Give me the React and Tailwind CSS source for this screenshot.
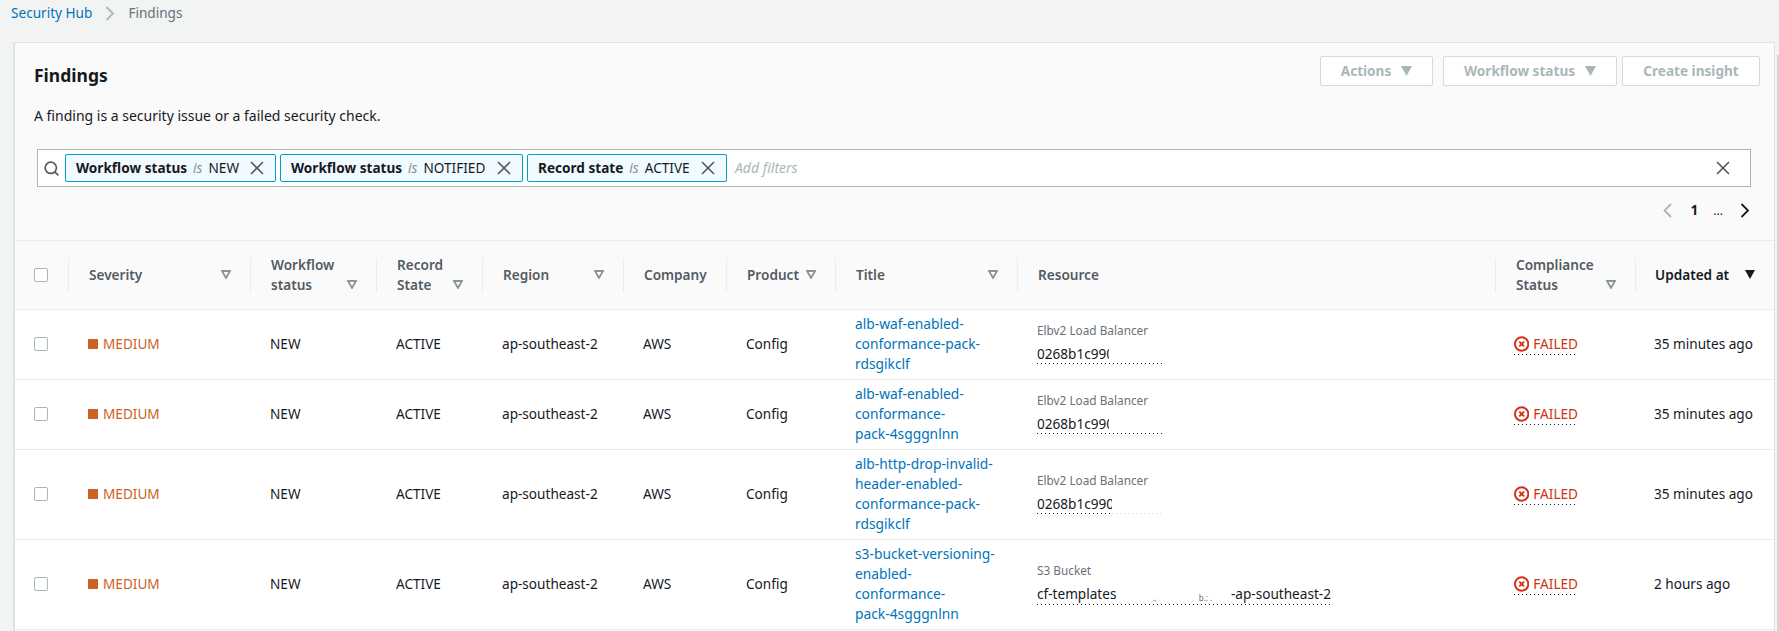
import { Search, X } from 'lucide-react';

const dots = 'bg-[repeating-linear-gradient(90deg,#16191f_0,#16191f_1.5px,transparent_1.5px,transparent_4px)] bg-[length:100%_1px] bg-bottom bg-no-repeat';
const lightDots = 'bg-[repeating-linear-gradient(90deg,#d5dbdb_0,#d5dbdb_1.5px,transparent_1.5px,transparent_4px)] bg-[length:100%_1px] bg-bottom bg-no-repeat';

const columns = [
  { label: 'Severity', width: 'w-[182px]', sort: true },
  { label: 'Workflow\nstatus', width: 'w-[126px]', sort: true },
  { label: 'Record\nState', width: 'w-[106px]', sort: true },
  { label: 'Region', width: 'w-[141px]', sort: true },
  { label: 'Company', width: 'w-[103px]' },
  { label: 'Product', width: 'w-[109px]', sort: true },
  { label: 'Title', width: 'w-[182px]', sort: true },
  { label: 'Resource', width: 'w-[478px]' },
  { label: 'Compliance\nStatus', width: 'w-[140px]', sort: true },
];

const rows = [
  {
    title: ['alb-waf-enabled-', 'conformance-pack-', 'rdsgikclf'],
    type: 'Elbv2 Load Balancer',
    clip: 'w-[72px]',
    id: '0268b1c990',
    rest: 'w-[54px]',
    restDots: dots,
    updated: '35 minutes ago',
  },
  {
    title: ['alb-waf-enabled-', 'conformance-', 'pack-4sgggnlnn'],
    type: 'Elbv2 Load Balancer',
    clip: 'w-[72px]',
    id: '0268b1c990',
    rest: 'w-[54px]',
    restDots: dots,
    updated: '35 minutes ago',
  },
  {
    title: ['alb-http-drop-invalid-', 'header-enabled-', 'conformance-pack-', 'rdsgikclf'],
    type: 'Elbv2 Load Balancer',
    clip: 'w-[75px]',
    id: '0268b1c990',
    rest: 'w-[51px]',
    restDots: lightDots,
    updated: '35 minutes ago',
  },
  {
    title: ['s3-bucket-versioning-', 'enabled-', 'conformance-', 'pack-4sgggnlnn'],
    type: 'S3 Bucket',
    bucket: true,
    updated: '2 hours ago',
  },
];

const chips = [
  { field: 'Workflow status', value: 'NEW', width: 'w-[211px]' },
  { field: 'Workflow status', value: 'NOTIFIED', width: 'w-[243px]' },
  { field: 'Record state', value: 'ACTIVE', width: 'w-[200px]' },
];

function Chevron({ dir = 'right', color = '#16191f', className = '' }) {
  const points = dir === 'right' ? '1.5,1 8,7.5 1.5,14' : '8,1 1.5,7.5 8,14';
  return (
    <svg width="10" height="15" viewBox="0 0 10 15" fill="none" className={className}>
      <polyline points={points} stroke={color} strokeWidth="1.8" />
    </svg>
  );
}

function SortIcon({ filled }) {
  return (
    <span className="h-5 flex items-center">
      <svg width="10" height="9" viewBox="0 0 10 9">
        {filled ? (
          <polygon points="0,0 10,0 5,9" fill="#16191f" />
        ) : (
          <polygon points="1,1 9,1 5,8" fill="none" stroke="#879596" strokeWidth="1.8" />
        )}
      </svg>
    </span>
  );
}

function Checkbox() {
  return <div className="w-[14px] h-[14px] ml-[19px] rounded-[2px] border border-[#aab7b8] bg-white" />;
}

function ActionButton({ label, width, caret }) {
  return (
    <button className={`${width} h-[30px] flex items-center justify-center gap-[10px] bg-white border border-[#d5dbdb] rounded-[2px] font-bold text-[#aab7b8]`}>
      {label}
      {caret && (
        <svg width="11" height="10" viewBox="0 0 11 10">
          <polygon points="0,0 11,0 5.5,10" fill="#aab7b8" />
        </svg>
      )}
    </button>
  );
}

function FailedIcon() {
  return (
    <svg width="16" height="16" viewBox="0 0 16 16" fill="none" stroke="#d13212" strokeWidth="2">
      <circle cx="8" cy="8" r="7" />
      <path d="M5.5 5.5l5 5M10.5 5.5l-5 5" />
    </svg>
  );
}

export default function App() {
  return (
    <div className="h-[631px] overflow-hidden bg-[#f2f3f3] text-[13.6px] text-[#16191f] font-['Noto_Sans',sans-serif]">
      <div className="h-[42px] pl-[11px] pb-[16px] flex items-center">
        <span className="text-[#0073bb]">Security Hub</span>
        <Chevron color="#aab7b8" className="ml-[13px] mr-[13px]" />
        <span className="text-[#687078]">Findings</span>
      </div>

      <div className="flex">
        <div className="ml-[13px] w-[1762px] h-[600px] bg-[#fafafa] border-l-2 border-r border-t border-[#dfe3e3]">
          <div className="h-[47px] flex justify-between pt-[13px] pl-[19px] pr-[14px]">
            <h1 className="mt-[6px] text-[17.5px] leading-[27px] font-bold">Findings</h1>
            <div className="flex">
              <ActionButton label="Actions" width="w-[113px]" caret />
              <div className="ml-[10px]"><ActionButton label="Workflow status" width="w-[174px]" caret /></div>
              <div className="ml-[5px]"><ActionButton label="Create insight" width="w-[138px]" /></div>
            </div>
          </div>

          <p className="pl-[19px] mt-[16px] text-sm leading-5">A finding is a security issue or a failed security check.</p>

          <div className="mt-[23px] ml-[22px] w-[1714px] h-[38px] flex items-center bg-white border border-[#aab7b8]">
            <Search size={17} strokeWidth={2.4} className="ml-[5px] mr-[5px] text-[#545b64]" />
            {chips.map((chip, i) => (
              <div key={i} className={`${chip.width} h-[28px] mr-[4px] flex items-center justify-between pl-[10px] pr-[7px] bg-[#f1faff] border border-[#00a1c9] rounded-[2px]`}>
                <span className="whitespace-nowrap">
                  <span className="font-bold">{chip.field}</span>
                  <span className="italic text-[#879596] mx-[6px]">is</span>
                  {chip.value}
                </span>
                <X size={22} strokeWidth={1.8} className="text-[#545b64]" />
              </div>
            ))}
            <span className="ml-[4px] italic text-sm text-[#aab7b8]">Add filters</span>
            <X size={22} strokeWidth={1.8} className="ml-auto mr-[16px] text-[#545b64]" />
          </div>

          <div className="h-[54px] pb-[6px] flex items-center justify-end pr-[24px] border-b border-[#eaeded]">
            <Chevron dir="left" color="#aab7b8" />
            <span className="ml-[18px] font-bold">1</span>
            <span className="ml-[15px] text-xs">...</span>
            <Chevron className="ml-[17px]" />
          </div>

          <table className="w-[1759px] table-fixed border-collapse">
            <thead>
              <tr className="h-[68px] border-b border-[#eaeded]">
                <th className="w-[53px] p-0"><Checkbox /></th>
                {columns.map((col) => (
                  <th key={col.label} className={`${col.width} p-0 font-semibold text-left text-[#545b64]`}>
                    <div className="h-[34px] flex items-center pl-5 pr-[19px] border-l border-[#eaeded]">
                      <div className="w-full flex items-end justify-between">
                        <span className="leading-5 whitespace-pre-line">{col.label}</span>
                        {col.sort && <SortIcon />}
                      </div>
                    </div>
                  </th>
                ))}
                <th className="p-0 font-semibold text-left">
                  <div className="h-[34px] flex items-center pl-[19px] pr-[19px] border-l border-[#eaeded]">
                    <div className="w-full flex items-center justify-between">
                      <span className="whitespace-nowrap">Updated at</span>
                      <SortIcon filled />
                    </div>
                  </div>
                </th>
              </tr>
            </thead>
            <tbody className="bg-white">
              {rows.map((row, i) => (
                <tr key={i} className="border-b border-[#eaeded]">
                  <td className="p-0"><Checkbox /></td>
                  <td className="pl-5 py-[5px]">
                    <div className="flex items-center text-[#cd6122]">
                      <span className="w-[10px] h-[10px] mr-[5px] bg-[#cd6122]" />
                      MEDIUM
                    </div>
                  </td>
                  <td className="pl-5">NEW</td>
                  <td className="pl-5">ACTIVE</td>
                  <td className="pl-5">ap-southeast-2</td>
                  <td className="pl-5">AWS</td>
                  <td className="pl-5">Config</td>
                  <td className="pl-5 py-[4.5px] text-[13.8px] leading-5 text-[#0073bb] whitespace-nowrap">
                    {row.title.map((line) => (
                      <div key={line}>{line}</div>
                    ))}
                  </td>
                  <td className="pl-5 pb-1">
                    <div className="text-[11.8px] leading-5 text-[#687078]">{row.type}</div>
                    {row.bucket ? (
                      <div className={`mt-1 w-[294px] flex items-end pb-px leading-5 ${dots}`}>
                        <span>cf-templates</span>
                        <span className="ml-[36px] text-[8px] leading-3 text-[#687078]">.,</span>
                        <span className="ml-[42px] text-[8px] leading-3 text-[#687078]">b.: .</span>
                        <span className="ml-auto">-ap-southeast-2</span>
                      </div>
                    ) : (
                      <div className="mt-1 flex pb-px leading-5">
                        <div className={`${row.clip} overflow-hidden whitespace-nowrap ${dots}`}>{row.id}</div>
                        <div className={`${row.rest} ${row.restDots}`} />
                      </div>
                    )}
                  </td>
                  <td className="pl-[19px]">
                    <div className={`w-[64px] pb-[1px] flex items-center gap-[4px] leading-5 text-[#d13212] ${dots}`}>
                      <FailedIcon />
                      FAILED
                    </div>
                  </td>
                  <td className="pl-[19px] whitespace-nowrap">{row.updated}</td>
                </tr>
              ))}
            </tbody>
          </table>
        </div>
        <div className="ml-[2px] mt-[13px] w-[2px] h-[576px] bg-[#d5d5d5]" />
      </div>
    </div>
  );
}
